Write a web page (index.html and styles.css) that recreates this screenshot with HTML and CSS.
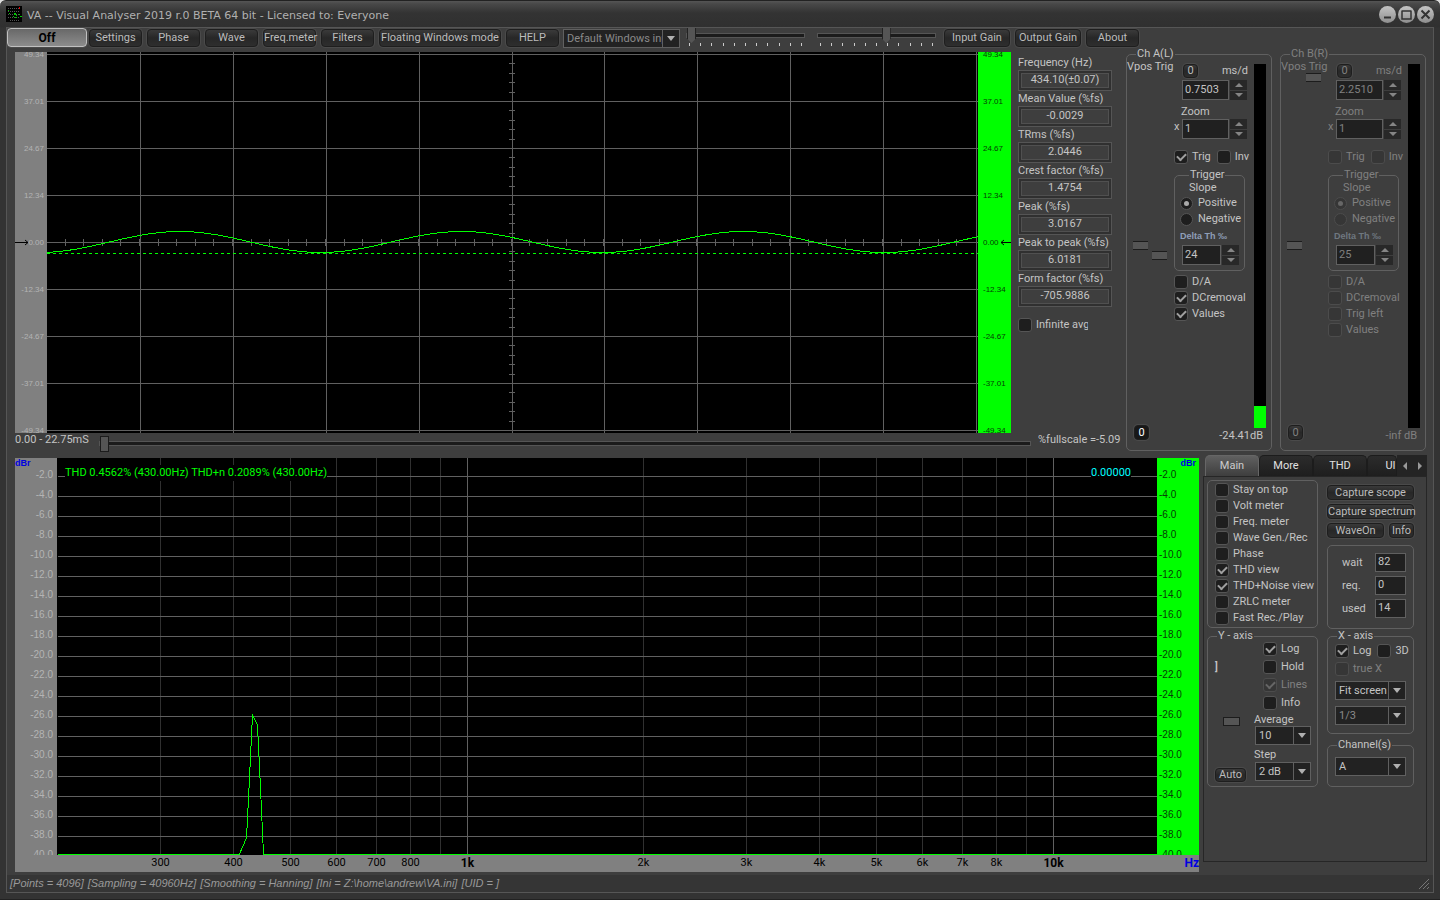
FILE: index.html
```html
<!DOCTYPE html>
<html lang="en">
<head>
<meta charset="utf-8">
<title>Visual Analyser</title>
<link rel="stylesheet" href="styles.css">
</head>
<body>
<div class="window">
  <header class="titlebar">
    <svg class="app-icon" viewBox="0 0 16 16" aria-hidden="true">
      <rect width="16" height="16" fill="#000"/>
      <path d="M2 2.5h12M2 5.5h12M2 8.5h12M2 11.5h12M4 14.5h9" stroke="#555" stroke-dasharray="1 1"/>
      <path d="M2 4h1v1h-1zM3 7h1v1h-1zM8 7h2v2h-2zM10 9h1v1h-1zM9 11h2v1h-2zM13 8h1v1h-1zM14 10h2v1h-2zM7 10h1v1h-1z" fill="#0c0"/>
      <rect x="13" y="1" width="1" height="2" fill="#e00"/>
    </svg>
    <h1 class="title">VA -- Visual Analyser 2019 r.0 BETA 64 bit - Licensed to: Everyone</h1>
    <div class="win-buttons">
      <button class="win-btn" aria-label="Minimise"><svg viewBox="0 0 17 17"><path d="M5 11.500h7" stroke="#333" stroke-width="2"/></svg></button>
      <button class="win-btn" aria-label="Maximise"><svg viewBox="0 0 17 17"><path d="M3.500 5h10M4 5v8h9V5" fill="none" stroke="#333" stroke-width="1.500"/></svg></button>
      <button class="win-btn" aria-label="Close"><svg viewBox="0 0 17 17"><path d="M4.500 4.500l8 8M12.500 4.500l-8 8" stroke="#333" stroke-width="2"/></svg></button>
    </div>
  </header>

  <main class="frame">
    <nav class="toolbar">
      <button class="btn off">Off</button>
      <div class="btn-row">
        <button class="btn tool">Settings</button>
        <button class="btn tool">Phase</button>
        <button class="btn tool">Wave</button>
        <button class="btn tool">Freq.meter</button>
        <button class="btn tool">Filters</button>
        <button class="btn tool wide">Floating Windows mode</button>
        <button class="btn tool">HELP</button>
      </div>
      <span class="combo device"><select aria-label="Input device" disabled><option>Default Windows input</option></select></span>
      <div class="gain">
        <input type="range" aria-label="Input gain" value="0">
        <div class="ticks"><i></i><i></i><i></i><i></i><i></i><i></i><i></i><i></i><i></i><i></i><i></i></div>
      </div>
      <div class="gain">
        <input type="range" aria-label="Output gain" value="59">
        <div class="ticks"><i></i><i></i><i></i><i></i><i></i><i></i><i></i><i></i><i></i><i></i><i></i></div>
      </div>
      <div class="btn-row">
        <button class="btn tool mid">Input Gain</button>
        <button class="btn tool mid">Output Gain</button>
        <button class="btn tool">About</button>
      </div>
    </nav>

    <section class="upper">
      <div class="scope-area">
        <div class="scope-row">
          <div class="scope">
            <div class="scope-axis left" id="scope-left"></div>
            <svg class="plot" id="scope-plot" viewBox="0 0 932 381" preserveAspectRatio="none"></svg>
            <div class="scope-axis right" id="scope-right"></div>
          </div>
          <div class="values">
            <label for="v1">Frequency (Hz)</label><output id="v1">434.10(±0.07)</output>
            <label for="v2">Mean Value (%fs)</label><output id="v2">-0.0029</output>
            <label for="v3">TRms (%fs)</label><output id="v3">2.0446</output>
            <label for="v4">Crest factor (%fs)</label><output id="v4">1.4754</output>
            <label for="v5">Peak (%fs)</label><output id="v5">3.0167</output>
            <label for="v6">Peak to peak (%fs)</label><output id="v6">6.0181</output>
            <label for="v7">Form factor (%fs)</label><output id="v7">-705.9886</output>
            <label class="check infinite"><input type="checkbox"><span>Infinite avg</span></label>
          </div>
        </div>
        <div class="time-row">
          <span class="time">0.00 - 22.75mS</span>
          <input class="time-slider" type="range" aria-label="Time position" value="0">
          <span class="fullscale">%fullscale =-5.09</span>
        </div>
      </div>

      <fieldset class="group channel">
        <legend>Ch A(L)</legend>
        <div class="channel-grid">
          <div class="faders">
            <div class="fader-head">Vpos Trig</div>
            <div class="fader-pair">
              <input class="fader" type="range" aria-label="Channel A vertical position" value="50">
              <input class="fader" type="range" aria-label="Channel A trigger level" value="47">
            </div>
          </div>
          <div class="controls">
            <div class="row rate"><button class="btn zero">0</button><label for="a-ms">ms/d</label></div>
            <div class="spin"><input id="a-ms" type="text" value="0.7503"><span class="arrows"><button aria-label="Up"></button><button aria-label="Down"></button></span></div>
            <label class="zoom-label" for="a-zoom">Zoom</label>
            <div class="spin zoom"><span class="times">x</span><input id="a-zoom" type="text" value="1"><span class="arrows"><button aria-label="Up"></button><button aria-label="Down"></button></span></div>
            <div class="row trig-inv"><label class="check"><input type="checkbox" checked>Trig</label><label class="check"><input type="checkbox">Inv</label></div>
            <fieldset class="group trigger">
              <legend>Trigger</legend>
              <div class="slope">Slope</div>
              <label class="check"><input type="radio" name="a-slope" checked>Positive</label>
              <label class="check"><input type="radio" name="a-slope">Negative</label>
              <label class="delta" for="a-delta">Delta Th ‰</label>
              <div class="spin short"><input id="a-delta" type="text" value="24"><span class="arrows"><button aria-label="Up"></button><button aria-label="Down"></button></span></div>
            </fieldset>
            <div class="stack">
              <label class="check"><input type="checkbox">D/A</label>
              <label class="check"><input type="checkbox" checked>DCremoval</label>
              <label class="check"><input type="checkbox" checked>Values</label>
            </div>
          </div>
          <div class="meter"><div class="level" style="height:6%"></div></div>
          <div class="channel-foot"><button class="btn zero bright">0</button><span>-24.41dB</span></div>
        </div>
      </fieldset>

      <fieldset class="group channel dim" disabled>
        <legend>Ch B(R)</legend>
        <div class="channel-grid">
          <div class="faders">
            <div class="fader-head">Vpos Trig</div>
            <div class="fader-pair">
              <input class="fader" type="range" aria-label="Channel B vertical position" value="50">
              <input class="fader" type="range" aria-label="Channel B trigger level" value="100">
            </div>
          </div>
          <div class="controls">
            <div class="row rate"><button class="btn zero">0</button><label for="b-ms">ms/d</label></div>
            <div class="spin"><input id="b-ms" type="text" value="2.2510"><span class="arrows"><button aria-label="Up"></button><button aria-label="Down"></button></span></div>
            <label class="zoom-label" for="b-zoom">Zoom</label>
            <div class="spin zoom"><span class="times">x</span><input id="b-zoom" type="text" value="1"><span class="arrows"><button aria-label="Up"></button><button aria-label="Down"></button></span></div>
            <div class="row trig-inv"><label class="check"><input type="checkbox">Trig</label><label class="check"><input type="checkbox">Inv</label></div>
            <fieldset class="group trigger">
              <legend>Trigger</legend>
              <div class="slope">Slope</div>
              <label class="check"><input type="radio" name="b-slope" checked>Positive</label>
              <label class="check"><input type="radio" name="b-slope">Negative</label>
              <label class="delta" for="b-delta">Delta Th ‰</label>
              <div class="spin short"><input id="b-delta" type="text" value="25"><span class="arrows"><button aria-label="Up"></button><button aria-label="Down"></button></span></div>
            </fieldset>
            <div class="stack">
              <label class="check"><input type="checkbox">D/A</label>
              <label class="check"><input type="checkbox">DCremoval</label>
              <label class="check"><input type="checkbox">Trig left</label>
              <label class="check"><input type="checkbox">Values</label>
            </div>
          </div>
          <div class="meter"></div>
          <div class="channel-foot"><button class="btn zero">0</button><span>-inf dB</span></div>
        </div>
      </fieldset>
    </section>

    <section class="lower">
      <div class="spectrum">
        <div class="db-axis left"><b>dBr</b><div id="db-left"></div></div>
        <div class="spectrum-view">
          <svg class="plot" id="spectrum-plot" viewBox="0 0 1100 397" preserveAspectRatio="none"></svg>
          <div class="readout"><span class="thd">THD 0.4562% (430.00Hz) THD+n 0.2089% (430.00Hz)</span><span class="cursor">0.00000</span></div>
        </div>
        <div class="db-axis right"><b>dBr</b><div id="db-right"></div></div>
        <div class="hz-axis"><div class="hz-scale" id="hz-scale"></div><b>Hz</b></div>
      </div>

      <div class="side">
        <div class="tabs" role="tablist">
          <button class="tab active" role="tab">Main</button>
          <button class="tab" role="tab">More</button>
          <button class="tab" role="tab">THD</button>
          <button class="tab cut" role="tab">UI</button>
          <div class="scroller">
            <button aria-label="Previous tabs"><svg viewBox="0 0 8 8"><path d="M6 0v8L2 4z"/></svg></button>
            <button aria-label="Next tabs"><svg viewBox="0 0 8 8"><path d="M2 0v8l4-4z"/></svg></button>
          </div>
        </div>
        <div class="panel">
          <div class="col">
            <div class="group options stack">
              <label class="check"><input type="checkbox"><span>Stay on top</span></label>
              <label class="check"><input type="checkbox"><span>Volt meter</span></label>
              <label class="check"><input type="checkbox"><span>Freq. meter</span></label>
              <label class="check"><input type="checkbox"><span>Wave Gen./Rec</span></label>
              <label class="check"><input type="checkbox"><span>Phase</span></label>
              <label class="check"><input type="checkbox" checked><span>THD view</span></label>
              <label class="check"><input type="checkbox" checked><span>THD+Noise view</span></label>
              <label class="check"><input type="checkbox"><span>ZRLC meter</span></label>
              <label class="check"><input type="checkbox"><span>Fast Rec./Play</span></label>
            </div>
            <fieldset class="group y-axis">
              <legend>Y - axis</legend>
              <div class="y-grid">
                <div class="y-left">
                  <b class="bracket">]</b>
                  <input class="fader" type="range" aria-label="Y axis position" value="50">
                  <button class="btn auto">Auto</button>
                </div>
                <div class="y-right">
                  <label class="check"><input type="checkbox" checked>Log</label>
                  <label class="check"><input type="checkbox">Hold</label>
                  <label class="check dim"><input type="checkbox" checked disabled>Lines</label>
                  <label class="check"><input type="checkbox">Info</label>
                  <label class="field-label" for="avg">Average</label>
                  <span class="combo"><select id="avg"><option>10</option></select></span>
                  <label class="field-label step" for="step">Step</label>
                  <span class="combo"><select id="step"><option>2 dB</option></select></span>
                </div>
              </div>
            </fieldset>
          </div>
          <div class="col right">
            <div class="capture">
              <button class="btn">Capture scope</button>
              <button class="btn">Capture spectrum</button>
              <div class="pair"><button class="btn grow">WaveOn</button><button class="btn info">Info</button></div>
            </div>
            <div class="group timing">
              <label for="wait">wait</label><input class="box" id="wait" type="text" value="82">
              <label for="req">req.</label><input class="box" id="req" type="text" value="0">
              <label for="used">used</label><input class="box" id="used" type="text" value="14">
            </div>
            <fieldset class="group x-axis">
              <legend>X - axis</legend>
              <div class="row x-checks"><label class="check"><input type="checkbox" checked>Log</label><label class="check"><input type="checkbox">3D</label></div>
              <label class="check dim"><input type="checkbox" disabled>true X</label>
              <span class="combo"><select aria-label="X scale"><option>Fit screen</option></select></span>
              <span class="combo"><select aria-label="Octave" disabled><option>1/3</option></select></span>
            </fieldset>
            <fieldset class="group channels">
              <legend>Channel(s)</legend>
              <span class="combo"><select aria-label="Channel"><option>A</option></select></span>
            </fieldset>
          </div>
        </div>
      </div>
    </section>

    <footer class="status">
      <span>[Points = 4096]</span><span>[Sampling = 40960Hz]</span><span>[Smoothing = Hanning]</span><span>[Ini = Z:\home\andrew\VA.ini]</span><span>[UID = ]</span>
      <svg class="grip" viewBox="0 0 10 10" aria-hidden="true"><path d="M0 10L10 0M4 10l6-6M8 10l2-2" stroke="#777"/></svg>
    </footer>
  </main>
</div>
<script src="script.js"></script>
</body>
</html>
```

FILE: styles.css
```css
* { box-sizing: border-box; }

body {
  margin: 0;
  background: #ddd;
  color: #c4c4c4;
  font: 11px/16px Roboto, "Liberation Sans", sans-serif;
}

button, input, select, output {
  font: inherit;
  color: inherit;
  margin: 0;
}

button { padding: 0; border: 0; background: none; white-space: nowrap; }

.window {
  display: flex;
  flex-direction: column;
  min-height: 100vh;
  padding: 0 6px 6px;
  border: 1px solid #222;
  border-width: 1px 0;
  border-radius: 6px 6px 0 0;
  background: linear-gradient(#555 0, #484848 3px, #333 12px, #303030 26px, #333 27px);
}

/* Title bar */
.titlebar {
  display: flex;
  align-items: center;
  gap: 5px;
  height: 26px;
}
.app-icon { width: 16px; height: 16px; }
.title {
  flex: 1;
  margin: 0;
  padding-top: 3px;
  color: #b0b0b0;
  font: 11px/16px "DejaVu Sans", sans-serif;
}
.win-buttons { display: flex; gap: 2px; }
.win-btn {
  width: 17px;
  height: 17px;
  border-radius: 50%;
  background: linear-gradient(#c4c4c4, #8e8e8e);
}
.win-btn svg { display: block; }

.frame {
  flex: 1;
  display: flex;
  flex-direction: column;
  border: 1px solid #565656;
  background: #3e3e3e;
}

/* Shared controls */
.btn {
  height: 18px;
  border: 1px solid #1e1e1e;
  border-radius: 4px;
  background: linear-gradient(#3a3a3a, #272727 50%, #2e2e2e);
  box-shadow: 0 0 0 1px #4a4a4a;
  color: #bcbcbc;
  line-height: 16px;
}
.row { display: flex; align-items: center; }

.check {
  display: flex;
  align-items: center;
  gap: 4px;
  height: 16px;
  white-space: nowrap;
}
.check input {
  appearance: none;
  flex: none;
  display: grid;
  place-items: center;
  width: 14px;
  height: 14px;
  border: 1px solid #555;
  border-radius: 3px;
  background: #1e1e1e;
}
.check input[type="radio"] { width: 13px; height: 13px; border-radius: 50%; }
.check input:disabled { border-color: #4c4c4c; background: #363636; }
.check input[type="checkbox"]:checked::before {
  content: "";
  width: 7px;
  height: 4px;
  border: solid #a0a0a0;
  border-width: 0 0 2px 2px;
  transform: translateY(-1px) rotate(-45deg);
}
.check input[type="radio"]:checked::before {
  content: "";
  width: 5px;
  height: 5px;
  border-radius: 50%;
  background: #aaa;
}
.check input[type="checkbox"]:disabled:checked::before { border-color: #666; }
.check input[type="radio"]:disabled:checked::before { background: #666; }
.check span { overflow: hidden; }

.group {
  min-width: 0;
  margin: 0;
  padding: 0;
  border: 1px solid #606060;
  border-radius: 5px;
}
.group > legend {
  margin-left: 9px;
  padding: 0 1px;
  line-height: 12px;
}

.combo {
  position: relative;
  display: block;
  height: 19px;
  border: 1px solid #606060;
  background: #222;
}
.combo select {
  appearance: none;
  display: block;
  width: 100%;
  height: 17px;
  padding: 0 16px 0 3px;
  border: 0;
  background: none;
  opacity: 1;
  line-height: 17px;
}
.combo::after {
  content: "";
  position: absolute;
  top: 6px;
  right: 4px;
  border: 4px solid transparent;
  border-top: 5px solid #b0b0b0;
  border-bottom: 0;
  pointer-events: none;
}
.combo::before {
  content: "";
  position: absolute;
  top: 0;
  right: 0;
  width: 16px;
  height: 17px;
  border-left: 1px solid #606060;
  pointer-events: none;
}
.combo select:disabled { color: #8a8a8a; }

.spin { display: flex; align-items: stretch; gap: 1px; height: 20px; }
.spin input, .box {
  width: 47px;
  height: 20px;
  padding: 0 0 2px 2px;
  border: 1px solid #606060;
  background: #202020;
}
.arrows { display: grid; grid-template-rows: 1fr 1fr; gap: 1px; width: 17px; }
.arrows button { display: grid; place-items: center; background: #282828; }
.arrows button::before {
  content: "";
  border: 4px solid transparent;
  border-bottom: 4px solid #858585;
  border-top: 0;
}
.arrows button:last-child::before {
  border-top: 4px solid #858585;
  border-bottom: 0;
}

input[type="range"] {
  appearance: none;
  background: none;
}

/* Toolbar */
.toolbar {
  display: flex;
  align-items: flex-start;
  height: 24px;
}
.btn-row { display: flex; gap: 5px; padding-top: 1px; }
.tool { width: 53px; }
.tool.wide { width: 122px; }
.tool.mid { width: 66px; }
.off {
  width: 80px;
  height: 19px;
  margin-right: 2px;
  border: 1px solid #c0c0c0;
  background: linear-gradient(#686868, #8c8c8c);
  color: #000;
  font-size: 12px;
  font-weight: 700;
}
.device { width: 117px; margin: 1px 6px 0 4px; }
.gain { width: 119px; margin-right: 12px; }
.gain + .gain { margin-right: 8px; }
.gain input {
  display: block;
  width: 119px;
  height: 15px;
}
.gain input::-webkit-slider-runnable-track {
  height: 5px;
  border: 1px solid #555;
  background: #1b1b1b;
}
.gain input::-webkit-slider-thumb {
  appearance: none;
  width: 9px;
  height: 15px;
  margin-top: -6px;
  background: linear-gradient(90deg, #222 1px, #555 1px 8px, #222 8px);
  clip-path: polygon(0 0, 100% 0, 100% 70%, 50% 100%, 0 70%);
}
.ticks { display: flex; justify-content: space-between; padding: 0 3px; }
.ticks i { width: 1px; height: 3px; background: #ccc; }

/* Upper half */
.upper { display: flex; gap: 8px; padding: 0 7px 0 8px; }
.scope-area { flex: 1; min-width: 0; }
.scope-row { display: flex; gap: 7px; }
.scope {
  flex: 1;
  display: flex;
  min-width: 0;
  height: 381px;
  overflow: hidden;
  background: #000;
}
.plot {
  display: block;
  flex: 1;
  min-width: 0;
  height: 100%;
  background: #000;
  shape-rendering: crispEdges;
}
.plot path { fill: none; vector-effect: non-scaling-stroke; }
.grid { stroke: #606060; }
.grid.minor { stroke: #303030; }
.trace { stroke: #0f0; }

.scope-axis {
  position: relative;
  flex: none;
  width: 32px;
  padding-right: 3px;
  background: #808080;
  color: #b4b4b4;
  font: 8px/47px "Liberation Sans", sans-serif;
  text-align: right;
}
.scope-axis > div { height: 47px; }
.scope-axis > div:first-child { margin-top: -21px; }
.scope-axis.right {
  width: 33px;
  padding-left: 5px;
  background: #0f0;
  color: #064006;
  text-align: left;
}
.scope-axis svg {
  position: absolute;
  left: 0;
  top: 187px;
  width: 14px;
  height: 7px;
}
.scope-axis.right svg { left: 22px; width: 11px; }

.values {
  width: 100px;
  padding-top: 3px;
}
.values > label, .values > output { display: block; }
.values > label { height: 15px; line-height: 15px; white-space: nowrap; }
.values > output {
  width: 94px;
  height: 21px;
  border: 1px solid #555;
  box-shadow: inset 0 0 0 2px #303030, inset 0 0 0 3px #505050;
  line-height: 18px;
  text-align: center;
}
.values > .infinite { display: flex; width: 70px; height: 16px; margin-top: 10px; line-height: 16px; }

.time-row { display: flex; align-items: center; height: 20px; }
.time { width: 84px; margin-top: -6px; white-space: nowrap; }
.time-slider { flex: 1; min-width: 0; height: 16px; margin-right: 7px; }
.time-slider::-webkit-slider-runnable-track {
  height: 5px;
  border: 1px solid #555;
  background: #1b1b1b;
}
.time-slider::-webkit-slider-thumb {
  appearance: none;
  width: 9px;
  height: 16px;
  margin-top: -6px;
  border: 1px solid #1c1c1c;
  background: #555;
}
.fullscale { width: 80px; margin-top: -6px; white-space: nowrap; }

/* Channels */
.channel { flex: none; width: 146px; height: 403px; margin-top: -4px; }
.channel-grid {
  display: grid;
  grid-template-columns: 46px 73px 12px;
  column-gap: 4px;
  grid-template-rows: 368px auto;
}
.channel-grid > .controls { margin-left: -3px; width: 78px; }
.dim, .dim input, .dim .btn { color: #808080; }
.fader-head { padding-top: 1px; line-height: 11px; white-space: nowrap; }
.fader-pair { display: flex; gap: 4px; padding: 1px 0 0 6px; }
.fader {
  writing-mode: vertical-lr;
  direction: rtl;
  width: 15px;
  height: 344px;
}
.fader::-webkit-slider-thumb {
  appearance: none;
  width: 15px;
  height: 9px;
  border: solid #1c1c1c;
  border-width: 1px 0;
  background: #555;
}
.rate { justify-content: space-between; width: 65px; height: 18px; margin: 2px 0 0 9px; }
.zero { width: 15px; height: 14px; line-height: 12px; }
.zero.bright { color: #fff; background: #181818; }
.controls > .spin { margin-left: 8px; }
.controls > .zoom { margin-left: 0; }
.controls .times { width: 7px; line-height: 16px; }
.zoom-label { display: block; height: 16px; margin: 3px 0 0 7px; line-height: 18px; }
.trig-inv { margin-top: 10px; gap: 6px; }
.trigger { width: 71px; height: 102px; margin-top: 4px; padding: 0 0 0 5px; }
.trigger .check { gap: 5px; }
.trigger .slope { padding-left: 9px; line-height: 14px; }
.trigger .delta {
  display: block;
  color: #8f9fb8;
  font: 700 9px/18px "Liberation Sans", sans-serif;
}
.dim .delta { color: #6f7880; }
.short input { width: 39px; }
.channel .short { margin-left: 2px; }
.stack { display: flex; flex-direction: column; }
.controls .stack { margin-top: 3px; }
.meter { display: flex; align-items: flex-end; height: 364px; margin-top: 4px; background: #000; }
.level { width: 100%; background: #0f0; }
.channel-foot {
  grid-column: 1 / -1;
  display: flex;
  justify-content: space-between;
  align-items: flex-start;
  padding: 0 3px 0 7px;
}
.channel-foot .btn { margin-top: -3px; height: 15px; }

/* Lower half */
.lower { flex: 1; display: flex; gap: 4px; padding: 0 6px 0 8px; margin-top: 2px; }
.spectrum {
  flex: 1;
  min-width: 0;
  display: grid;
  grid-template: 397px 17px / 42px 1fr 42px;
  margin-top: 3px;
  align-self: flex-start;
}
.spectrum-view { position: relative; min-width: 0; }
.spectrum-view .plot { width: 100%; }
.readout {
  position: absolute;
  inset: 7px 26px auto 8px;
  display: flex;
  justify-content: space-between;
  color: #0f0;
}
.readout span { background: #000; }
.readout .cursor { color: #0ff; }
.db-axis {
  overflow: hidden;
  background: #808080;
  color: #b4b4b4;
  font: 10px/20px "Liberation Sans", sans-serif;
}
.db-axis b { display: block; height: 7px; color: #0000e0; line-height: 10px; font-size: 9px; }
.db-axis.left > div { padding-right: 4px; text-align: right; }
.db-axis.right { background: #0f0; color: #064006; }
.db-axis.right b { padding-right: 3px; text-align: right; }
.db-axis.right > div { padding-left: 2px; }
.hz-axis {
  grid-column: 1 / -1;
  display: grid;
  grid-template-columns: 42px 1fr 42px;
  background: #808080;
  color: #000;
}
.hz-scale { grid-column: 2; position: relative; }
.hz-scale span { position: absolute; top: 0; transform: translateX(-50%); }
.hz-scale .decade { font-size: 12px; font-weight: 700; }
.hz-axis > b { color: #0000e0; font-size: 12px; text-align: right; }

/* Side panel */
.side { width: 224px; display: flex; flex-direction: column; }
.tabs { display: flex; height: 21px; padding-left: 2px; }
.tab {
  width: 54px;
  border: 1px solid #1c1c1c;
  border-bottom: 0;
  border-radius: 5px 5px 0 0;
  background: linear-gradient(#2c2c2c, #1e1e1e);
  color: #e0e0e0;
}
.tab.active { border-color: #666; background: linear-gradient(#606060, #3e3e3e); color: #ccc; }
.tab.cut { width: 30px; padding-left: 17px; overflow: hidden; }
.scroller { flex: 1; display: flex; justify-content: space-around; align-items: center; background: #242424; }
.scroller svg { display: block; width: 8px; height: 8px; fill: #999; }
.panel {
  display: flex;
  gap: 9px;
  height: 386px;
  padding: 3px 12px 0 3px;
  border: 1px solid #262626;
}
.col { width: 111px; display: flex; flex-direction: column; }
.col.right { width: 87px; }
.options { height: 148px; padding: 1px 0 0 7px; }
.options .check span { width: 83px; }
.y-axis { height: 157px; margin-top: 2px; }
.y-grid { display: flex; height: 144px; }
.y-left { width: 47px; padding: 17px 0 0 7px; }
.y-left .bracket { display: block; height: 16px; font-size: 10px; }
.y-left .fader { display: block; width: 17px; height: 92px; margin-left: 8px; }
.y-left .fader::-webkit-slider-thumb { width: 17px; border-width: 1px; }
.auto { display: block; width: 31px; height: 14px; margin-top: 1px; line-height: 12px; }
.y-right { width: 56px; margin-top: -2px; }
.y-right .check { height: 18px; padding-left: 8px; }
.field-label { display: block; line-height: 15px; height: 14px; margin-left: -1px; }
.field-label.step { margin-top: 2px; height: 15px; }
.capture { display: flex; flex-direction: column; gap: 4px; padding-top: 5px; }
.capture .btn { height: 15px; line-height: 13px; }
.pair { display: flex; gap: 5px; }
.pair .grow { flex: 1; }
.pair .info { width: 25px; }
.timing {
  display: grid;
  grid-template-columns: 33px 30px;
  grid-auto-rows: 19px;
  gap: 4px 0;
  align-items: center;
  height: 84px;
  margin-top: 7px;
  padding: 7px 0 0 14px;
}
.timing .box { width: 31px; height: 19px; }
.x-axis { height: 104px; margin-top: 1px; padding: 0 7px; }
.x-axis > legend, .channels > legend { margin-left: 2px; }
.x-axis > .combo { margin-top: 6px; }
.x-axis .check.dim { margin-top: 2px; }
.x-axis .check + .combo { margin-top: 4px; }
.x-checks { gap: 6px; padding-top: 1px; }
.channels { height: 48px; margin-top: 5px; padding: 6px 7px 0; }

/* Status bar */
.status {
  display: flex;
  gap: 4px;
  height: 17px;
  padding: 0 4px 0 3px;
  background: #353535;
  color: #999;
  font: italic 11px/16px "Liberation Sans", sans-serif;
}
.grip { width: 10px; height: 10px; margin: 4px 0 0 auto; }
```

FILE: script.js
```js
const NS = 'http://www.w3.org/2000/svg';

function line(svg, cls, d, dash) {
  const p = document.createElementNS(NS, 'path');
  p.setAttribute('class', cls);
  p.setAttribute('d', d);
  if (dash) p.setAttribute('stroke-dasharray', dash);
  svg.appendChild(p);
}

function label(parent, text, tag) {
  const el = document.createElement(tag || 'div');
  el.textContent = text;
  parent.appendChild(el);
  return el;
}

/* Oscilloscope */
const scope = document.getElementById('scope-plot');
let d = '';
for (let i = 0; i < 9; i++) d += `M0 ${2.5 + 47 * i}H932`;
for (let i = 1; i <= 10; i++) d += `M${0.5 + 93 * i} 0V381`;
for (let i = 1; i < 50; i++) d += `M${Math.round(18.6 * i) - 0.5} 187V194`;
for (let i = 1; i < 40; i++) d += `M462 ${Math.round(2 + 9.4 * i) + 0.5}H469`;
line(scope, 'grid', d);
d = '';
for (let x = 0; x <= 932; x++) {
  d += `${x ? 'L' : 'M'}${x} ${(190 - 10.5 * Math.cos((x - 133) / 282 * 2 * Math.PI)).toFixed(2)}`;
}
line(scope, 'trace', d);
line(scope, 'trace', 'M0 201.5H932', '3 3');

const volts = ['49.34', '37.01', '24.67', '12.34', '0.00', '-12.34', '-24.67', '-37.01', '-49.34'];
for (const side of ['left', 'right']) {
  const axis = document.getElementById('scope-' + side);
  volts.forEach(v => label(axis, v));
  const arrow = document.createElementNS(NS, 'svg');
  arrow.setAttribute('viewBox', side === 'left' ? '0 0 14 7' : '0 0 11 7');
  axis.appendChild(arrow);
  const p = document.createElementNS(NS, 'path');
  p.setAttribute('d', side === 'left' ? 'M0 3.5H13M10 1L13 3.5L10 6' : 'M11 3.5H1M4 1L1 3.5L4 6');
  p.setAttribute('fill', 'none');
  p.setAttribute('stroke', '#000');
  arrow.appendChild(p);
}

/* Spectrum */
const spectrum = document.getElementById('spectrum-plot');
const xOf = f => Math.floor(410 + 586 * Math.log10(f / 1000)) + 0.5;
d = '';
for (const f of [300, 400, 500, 600, 700, 800, 900, 2000, 3000, 4000, 5000, 6000, 7000, 8000, 9000]) {
  d += `M${xOf(f)} 0V397`;
}
line(spectrum, 'grid minor', d);
d = '';
for (let i = 0; i < 19; i++) d += `M1 ${18.5 + 20 * i}H1100`;
d += `M${xOf(1000)} 0V397M${xOf(10000)} 0V397`;
line(spectrum, 'grid', d);
line(spectrum, 'trace', 'M1 396H182.500L189.500 380L192.500 320L195.500 257L200.500 267L203.500 330L206.500 396H1100');

for (const side of ['left', 'right']) {
  const axis = document.getElementById('db-' + side);
  for (let i = 1; i <= 20; i++) label(axis, (-2 * i).toFixed(1));
}

const scale = document.getElementById('hz-scale');
for (const f of [300, 400, 500, 600, 700, 800, 1000, 2000, 3000, 4000, 5000, 6000, 7000, 8000, 10000]) {
  const el = label(scale, f < 1000 ? f : f / 1000 + 'k', 'span');
  el.style.left = xOf(f) / 11 + '%';
  if (f === 1000 || f === 10000) el.className = 'decade';
}
```
